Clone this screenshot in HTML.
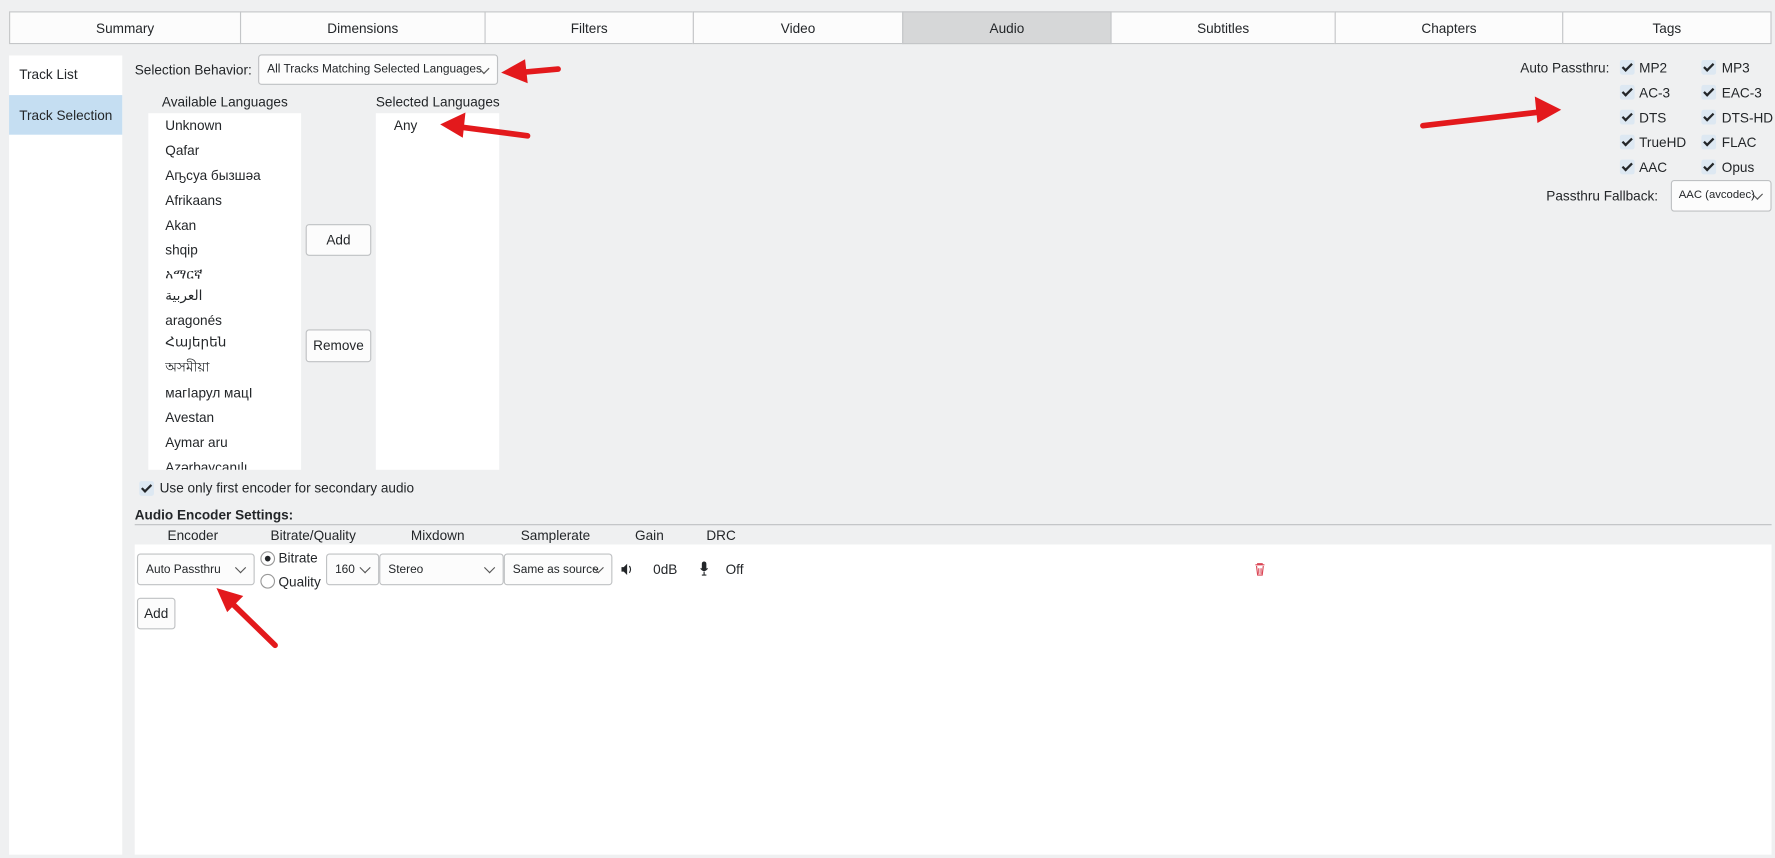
<!DOCTYPE html>
<html><head><meta charset="utf-8"><style>
html,body{margin:0;padding:0;width:1775px;height:858px;overflow:hidden;background:#eff0f1}
#w{position:absolute;left:0;top:0;width:1568px;height:758px;transform:scale(1.132);transform-origin:0 0;font-family:"Liberation Sans","Noto Sans CJK JP","DejaVu Sans",sans-serif;font-size:12px;color:#232629}
.a{position:absolute;white-space:nowrap}
.tab{position:absolute;top:10px;height:29px;line-height:29px;text-align:center;border:1px solid #c4c6c8;background:#fcfcfc;box-sizing:border-box}
.box{position:absolute;background:#fff}
.btn{position:absolute;background:#fcfcfc;border:1px solid #bfc1c3;border-radius:3px;box-sizing:border-box;text-align:center}
.cb{position:absolute;background:#fcfcfc;border:1px solid #bfc1c3;border-radius:3px;box-sizing:border-box;padding-left:7px;font-size:10.5px;overflow:hidden;white-space:nowrap}
.cb:after{content:"";position:absolute;right:8px;top:50%;width:6px;height:6px;border-right:1px solid #555;border-bottom:1px solid #555;transform:translateY(-70%) rotate(45deg)}
.chk{position:absolute;width:13px;height:13px;background:#dde8f2;border-radius:2px}
.chk:after{content:"";position:absolute;left:4px;top:1px;width:3px;height:7px;border-right:2px solid #232629;border-bottom:2px solid #232629;transform:rotate(45deg)}
.li{position:absolute;left:15px}
</style></head><body><div id="w">
<div class="tab" style="left:8px;width:205px">Summary</div>
<div class="tab" style="left:212px;width:217px">Dimensions</div>
<div class="tab" style="left:428px;width:185px">Filters</div>
<div class="tab" style="left:612px;width:186px">Video</div>
<div class="tab" style="left:797px;width:185px;background:#d6d7d8">Audio</div>
<div class="tab" style="left:981px;width:199px">Subtitles</div>
<div class="tab" style="left:1179px;width:202px">Chapters</div>
<div class="tab" style="left:1380px;width:185px">Tags</div>

<div class="box" style="left:8px;top:49px;width:100px;height:706px"></div>
<div class="a" style="left:17px;top:59px">Track List</div>
<div class="a" style="left:8px;top:84px;width:100px;height:35px;background:#c5def2"></div>
<div class="a" style="left:17px;top:95px">Track Selection</div>

<div class="a" style="left:119px;top:55px">Selection Behavior:</div>
<div class="cb" style="left:228px;top:48px;width:212px;height:27px;line-height:25px;padding-right:22px">All Tracks Matching Selected Languages</div>

<div class="a" style="left:143px;top:83px">Available Languages</div>
<div class="a" style="left:332px;top:83px">Selected Languages</div>
<div class="box" style="left:131px;top:100px;width:135px;height:315px;overflow:hidden">
<div class="li" style="top:4px">Unknown</div>
<div class="li" style="top:26px">Qafar</div>
<div class="li" style="top:48px">Аҧсуа бызшәа</div>
<div class="li" style="top:70px">Afrikaans</div>
<div class="li" style="top:92px">Akan</div>
<div class="li" style="top:114px">shqip</div>
<div class="li" style="top:135px">አማርኛ</div>
<div class="li" style="top:154px">العربية</div>
<div class="li" style="top:176px">aragonés</div>
<div class="li" style="top:195px">Հայերեն</div>
<div class="li" style="top:216px">অসমীয়া</div>
<div class="li" style="top:240px">магӀарул мацӀ</div>
<div class="li" style="top:262px">Avestan</div>
<div class="li" style="top:284px">Aymar aru</div>
<div class="li" style="top:306px">Azərbaycanılı</div>
</div>
<div class="box" style="left:332px;top:100px;width:109px;height:315px"><div class="li" style="left:16px;top:4px">Any</div></div>
<div class="btn" style="left:270px;top:198px;width:58px;height:28px;line-height:26px">Add</div>
<div class="btn" style="left:270px;top:291px;width:58px;height:29px;line-height:27px">Remove</div>

<div class="chk" style="left:123px;top:425px"></div>
<div class="a" style="left:141px;top:424px">Use only first encoder for secondary audio</div>
<div class="a" style="left:119px;top:448px;font-weight:bold">Audio Encoder Settings:</div>
<div class="a" style="left:119px;top:463px;width:1446px;height:1px;background:#bfc1c3"></div>
<div class="a" style="left:148px;top:466px">Encoder</div>
<div class="a" style="left:239px;top:466px">Bitrate/Quality</div>
<div class="a" style="left:363px;top:466px">Mixdown</div>
<div class="a" style="left:460px;top:466px">Samplerate</div>
<div class="a" style="left:561px;top:466px">Gain</div>
<div class="a" style="left:624px;top:466px">DRC</div>
<div class="box" style="left:119px;top:481px;width:1446px;height:274px"></div>
<div class="cb" style="left:121px;top:489px;width:104px;height:28px;line-height:26px">Auto Passthru</div>
<div class="a" style="left:230px;top:487px;width:11px;height:11px;border:1px solid #999;border-radius:50%;background:#fff"></div>
<div class="a" style="left:234px;top:491px;width:5px;height:5px;border-radius:50%;background:#232629"></div>
<div class="a" style="left:246px;top:486px">Bitrate</div>
<div class="a" style="left:230px;top:507px;width:11px;height:11px;border:1px solid #999;border-radius:50%;background:#fff"></div>
<div class="a" style="left:246px;top:507px">Quality</div>
<div class="cb" style="left:288px;top:489px;width:47px;height:28px;line-height:26px">160</div>
<div class="cb" style="left:335px;top:489px;width:110px;height:28px;line-height:26px">Stereo</div>
<div class="cb" style="left:445px;top:489px;width:96px;height:28px;line-height:26px;padding-right:16px">Same as source</div>
<svg class="a" style="left:548px;top:497px" width="10" height="12"><path d="M1 4h2l3-3v10l-3-3H1z" fill="#232629"/><path d="M8 3q2 3 0 6" stroke="#232629" fill="none"/></svg>
<div class="a" style="left:577px;top:496px">0dB</div>
<svg class="a" style="left:618px;top:496px" width="8" height="13"><rect x="2" y="0" width="4" height="8" rx="2" fill="#232629"/><path d="M1 6q3 4 6 0M4 9v3M2 12h4" stroke="#232629" fill="none"/></svg>
<div class="a" style="left:641px;top:496px">Off</div>
<svg class="a" style="left:1108px;top:497px" width="10" height="12"><path d="M1 2h8M3 2V1h4v1M2 3l1 8h4l1-8M4 5v5M6 5v5" stroke="#da4453" fill="none"/></svg>
<div class="btn" style="left:121px;top:528px;width:34px;height:28px;line-height:26px">Add</div>

<div class="a" style="left:1343px;top:53px">Auto Passthru:</div>
<div class="chk" style="left:1431px;top:53px"></div><div class="a" style="left:1448px;top:53px">MP2</div>
<div class="chk" style="left:1503px;top:53px"></div><div class="a" style="left:1521px;top:53px">MP3</div>
<div class="chk" style="left:1431px;top:75px"></div><div class="a" style="left:1448px;top:75px">AC-3</div>
<div class="chk" style="left:1503px;top:75px"></div><div class="a" style="left:1521px;top:75px">EAC-3</div>
<div class="chk" style="left:1431px;top:97px"></div><div class="a" style="left:1448px;top:97px">DTS</div>
<div class="chk" style="left:1503px;top:97px"></div><div class="a" style="left:1521px;top:97px">DTS-HD</div>
<div class="chk" style="left:1431px;top:119px"></div><div class="a" style="left:1448px;top:119px">TrueHD</div>
<div class="chk" style="left:1503px;top:119px"></div><div class="a" style="left:1521px;top:119px">FLAC</div>
<div class="chk" style="left:1431px;top:141px"></div><div class="a" style="left:1448px;top:141px">AAC</div>
<div class="chk" style="left:1503px;top:141px"></div><div class="a" style="left:1521px;top:141px">Opus</div>
<div class="a" style="left:1366px;top:166px">Passthru Fallback:</div>
<div class="cb" style="left:1476px;top:159px;width:89px;height:28px;line-height:26px;font-size:10px;padding-left:6px;padding-right:16px">AAC (avcodec)</div>

<svg class="a" style="left:0;top:0" width="1568" height="758">
<g stroke="#e3191c" stroke-width="5" stroke-linecap="round" fill="#e3191c">
<path d="M493 61L460 64"/><path d="M445 64l18-10 2 18z" stroke-width="2"/>
<path d="M466 120L405 112"/><path d="M391 110l19-9-2 19z" stroke-width="2"/>
<path d="M1257 111L1360 99"/><path d="M1377 97l-20-10 2 20z" stroke-width="2"/>
<path d="M243 570L205 533"/><path d="M193 521l20 6-12 12z" stroke-width="2"/>
</g></svg>
</div></body></html>
